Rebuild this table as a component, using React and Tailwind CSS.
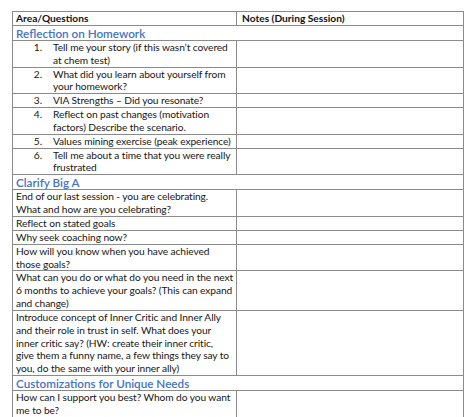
import React from "react";

const font = { fontFamily: "Lato, 'Open Sans', sans-serif" };

function Lines({ lines }) {
  return lines.map((l, i) => (
    <React.Fragment key={i}>
      {i > 0 && <br />}
      {l}
    </React.Fragment>
  ));
}

function Row({ lines }) {
  return (
    <div className="flex border-b border-[#8a8a8a]">
      <div className="w-[224px] shrink-0 border-r border-[#8a8a8a] pl-[3px] text-[10.2px] leading-[12.85px] tracking-[-0.08px] text-[#161616] whitespace-nowrap">
        <Lines lines={lines} />
      </div>
      <div className="flex-1" />
    </div>
  );
}

function Item({ n, lines }) {
  return (
    <div className="flex border-b border-[#8a8a8a]">
      <div className="w-[224px] shrink-0 border-r border-[#8a8a8a] pl-[3px] text-[10.2px] leading-[12.85px] tracking-[-0.08px] text-[#161616] whitespace-nowrap flex">
        <div className="w-[26px] shrink-0 text-right">{n}.</div>
        <div className="pl-[11px]">
          <Lines lines={lines} />
        </div>
      </div>
      <div className="flex-1" />
    </div>
  );
}

function Section({ children }) {
  return (
    <div className="border-b border-[#8a8a8a] pl-[3px] text-[11.7px] leading-[14px] font-semibold text-[#4472c4]">
      {children}
    </div>
  );
}

export default function App() {
  return (
    <div className="w-[474px] h-[417px] bg-white overflow-hidden" style={font}>
      <div className="ml-[12px] mt-[11px] w-[452px] border-t border-l border-r border-[#8a8a8a] border-b-2 border-b-[#b4b4b4]">
        <div className="flex border-b border-[#8a8a8a] text-[10.2px] leading-[12.85px] font-bold text-[#111]">
          <div className="w-[224px] shrink-0 border-r border-[#8a8a8a] pl-[3px]">Area/Questions</div>
          <div className="flex-1 pl-[5px]">Notes (During Session)</div>
        </div>
        <Section>Reflection on Homework</Section>
        <Item n={1} lines={["Tell me your story (if this wasn’t covered", "at chem test)"]} />
        <Item n={2} lines={["What did you learn about yourself from", "your homework?"]} />
        <Item n={3} lines={["VIA Strengths – Did you resonate?"]} />
        <Item n={4} lines={["Reflect on past changes (motivation", "factors) Describe the scenario."]} />
        <Item n={5} lines={["Values mining exercise (peak experience)"]} />
        <Item n={6} lines={["Tell me about a time that you were really", "frustrated"]} />
        <Section>Clarify Big A</Section>
        <Row lines={["End of our last session - you are celebrating.", "What and how are you celebrating?"]} />
        <Row lines={["Reflect on stated goals"]} />
        <Row lines={["Why seek coaching now?"]} />
        <Row lines={["How will you know when you have achieved", "those goals?"]} />
        <Row lines={["What can you do or what do you need in the next", "6 months to achieve your goals? (This can expand", "and change)"]} />
        <Row
          lines={[
            "Introduce concept of Inner Critic and Inner Ally",
            "and their role in trust in self. What does your",
            "inner critic say? (HW: create their inner critic,",
            "give them a funny name, a few things they say to",
            "you, do the same with your inner ally)",
          ]}
        />
        <Section>Customizations for Unique Needs</Section>
        <div className="flex">
          <div className="w-[224px] shrink-0 border-r border-[#8a8a8a] pl-[3px] text-[10.2px] leading-[12.85px] tracking-[-0.08px] text-[#161616] whitespace-nowrap">
            <Lines lines={["How can I support you best? Whom do you want", "me to be?"]} />
          </div>
          <div className="flex-1" />
        </div>
      </div>
    </div>
  );
}
